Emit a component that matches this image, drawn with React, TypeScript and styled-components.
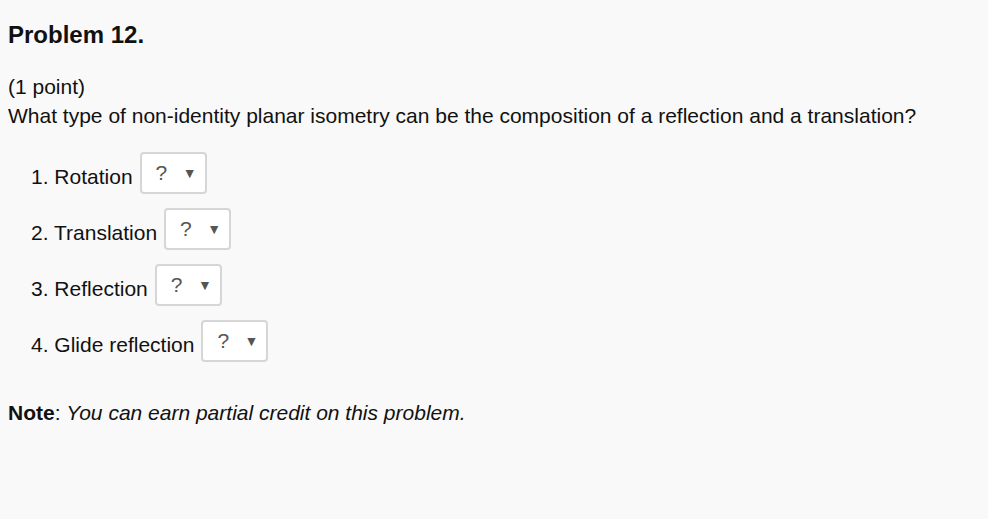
import React from "react"
import styled, { createGlobalStyle } from "styled-components"

const GlobalStyle = createGlobalStyle`
  html, body {
    margin: 0;
    padding: 0;
    background: #f9f9f9;
  }
  body {
    font-family: "Liberation Sans", Arial, sans-serif;
    font-size: 21px;
    color: #111;
  }
`

const Page = styled.div`
  padding: 20px 8px 0 8px;
`

const Title = styled.h2`
  margin: 0 0 22px 0;
  font-size: 24px;
  font-weight: bold;
  line-height: 30px;
`

const Body = styled.div`
  font-size: 21px;
  line-height: 29px;
`

const OptionList = styled.ol`
  list-style: none;
  margin: 22px 0 0 0;
  padding: 0 0 0 23px;
  display: flex;
  flex-direction: column;
  gap: 14px;
  font-size: 21px;
`

const OptionItem = styled.li`
  display: flex;
  align-items: center;
  gap: 7px;
  height: 42px;
`

const Label = styled.span`
  padding-top: 8px;
`

const SelectBox = styled.div`
  box-sizing: border-box;
  width: 67px;
  height: 42px;
  background: #fff;
  border: 2px solid #d6d6d6;
  border-radius: 4px;
  display: flex;
  align-items: center;
  justify-content: space-between;
  padding: 0 8px 0 14px;
  font-size: 21px;
  color: #555;
`

const Arrow = styled.span`
  font-size: 14px;
  color: #555;
`

const Note = styled.p`
  margin: 36px 0 0 0;
  font-size: 21px;
  line-height: 29px;
`

const NoteText = styled.em`
  font-style: italic;
`

const options = ["Rotation", "Translation", "Reflection", "Glide reflection"]

const App: React.FC = () => {
  return (
    <>
      <GlobalStyle />
      <Page>
        <Title>Problem 12.</Title>
        <Body>
          <div>(1 point)</div>
          <div>What type of non-identity planar isometry can be the composition of a reflection and a translation?</div>
        </Body>
        <OptionList>
          {options.map((opt, i) => (
            <OptionItem key={opt}>
              <Label>
                {i + 1}. {opt}
              </Label>
              <SelectBox>
                <span>?</span>
                <Arrow>▼</Arrow>
              </SelectBox>
            </OptionItem>
          ))}
        </OptionList>
        <Note>
          <b>Note</b>: <NoteText>You can earn partial credit on this problem.</NoteText>
        </Note>
      </Page>
    </>
  )
}

export default App
